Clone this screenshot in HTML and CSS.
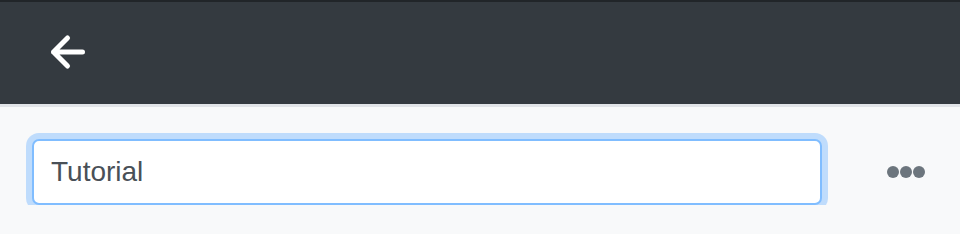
FILE: index.html
```html
<!DOCTYPE html>
<html lang="en">
<head>
  <meta charset="UTF-8" />
  <meta name="viewport" content="width=device-width, initial-scale=1.0"/>
  <title>Tutorial</title>
  <link rel="stylesheet" href="styles.css">
</head>
<body>
  <header class="topbar">
    <div class="back-arrow" onclick="history.back()">
      <svg width="40" height="38" viewBox="0 0 40 38">
        <path d="M5.5 18 H34.5 M19.5 4 L5.5 18 L19.5 32" fill="none" stroke="#fff" stroke-width="5" stroke-linecap="round" stroke-linejoin="round"/>
      </svg>
    </div>
  </header>

  <div class="title-row">
    <input class="title-input" type="text" value="Tutorial">
    <div class="more-btn">
      <span></span><span></span><span></span>
    </div>
  </div>
</body>
</html>
```

FILE: styles.css
```css
body {
  margin: 0;
  font-family: "Liberation Sans", Arial, sans-serif;
  background-color: #f8f9fa;
}
.topbar {
  display: flex;
  align-items: center;
  height: 102px;
  padding-left: 48px;
  background: #343a40;
  border-top: 2px solid #212529;
  border-bottom: 3px solid #e1e4e8;
}
.back-arrow {
  display: flex;
  cursor: pointer;
}
.title-row {
  display: flex;
  align-items: center;
  padding: 32px 35px 0 32px;
}
.title-input {
  flex: 1;
  height: 66px;
  box-sizing: border-box;
  padding: 0 17px;
  font-family: inherit;
  font-size: 28px;
  color: #495057;
  background: #fff;
  border: 2px solid #80bdff;
  border-radius: 7px;
  box-shadow: 0 0 0 6px #bfdcfc;
  outline: none;
}
.more-btn {
  display: flex;
  gap: 1px;
  margin-left: 65px;
  cursor: pointer;
}
.more-btn span {
  width: 12px;
  height: 12px;
  border-radius: 50%;
  background: #6c757d;
}
```
